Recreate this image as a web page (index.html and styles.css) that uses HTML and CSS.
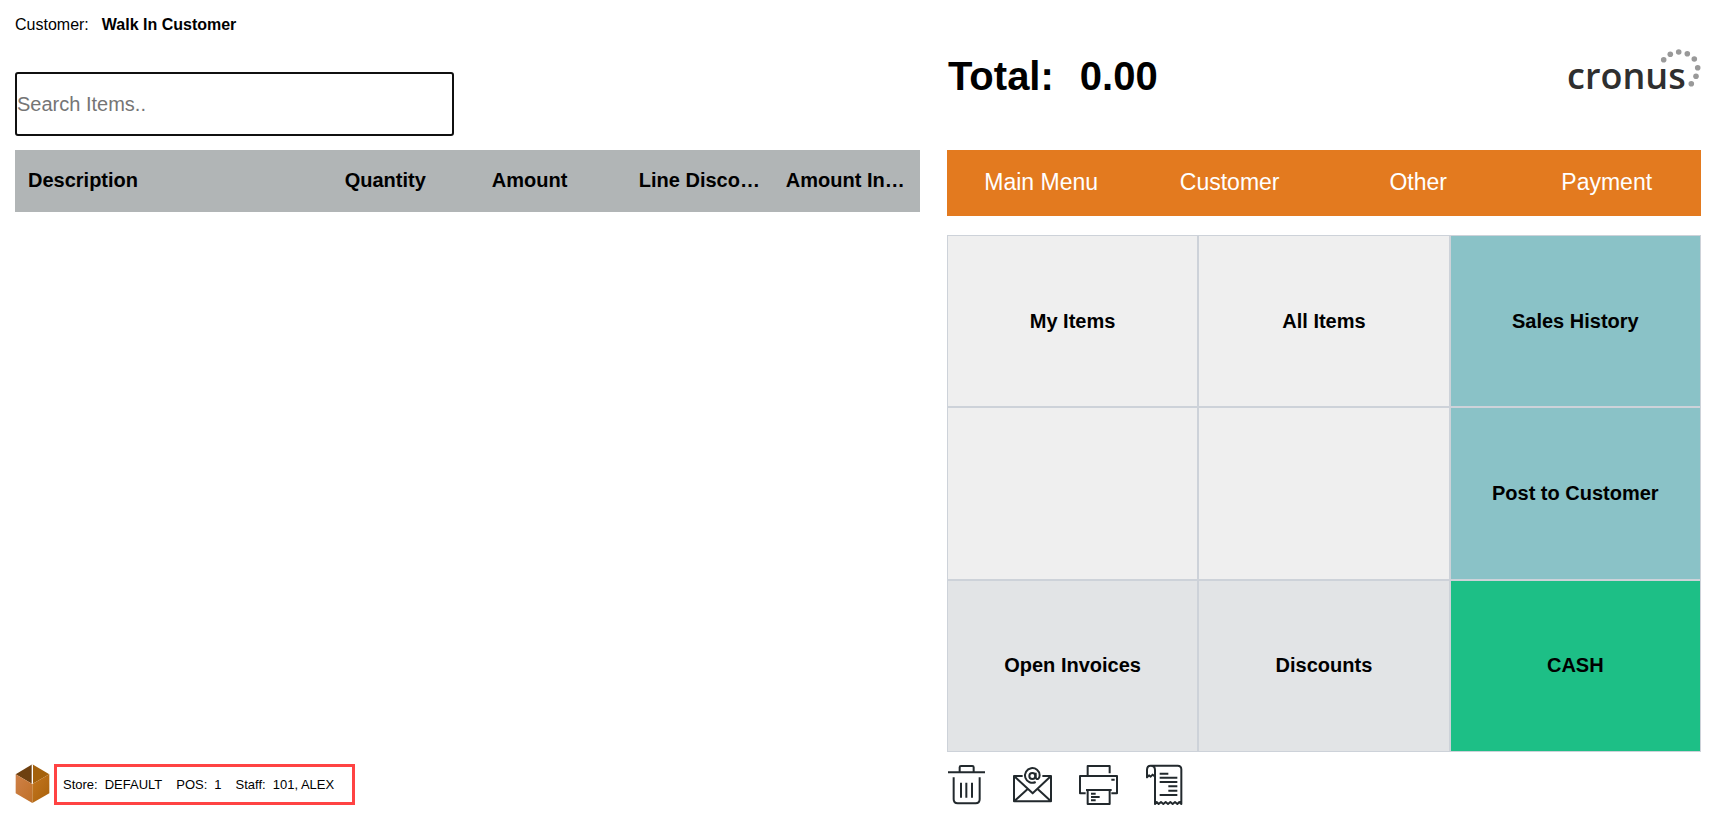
FILE: index.html
```html
<!DOCTYPE html>
<html lang="en">
<head>
  <meta charset="UTF-8" />
  <meta name="viewport" content="width=device-width, initial-scale=1.0"/>
  <title>POS</title>
  <link rel="stylesheet" href="styles.css">
</head>
<body>

  <main class="pos">
    <section class="sale">
      <div class="customer">
        <span>Customer:</span>
        <strong>Walk In Customer</strong>
      </div>

      <input class="search" type="text" placeholder="Search Items.." aria-label="Search Items">

      <table class="lines">
        <thead>
          <tr>
            <th class="wide">Description</th>
            <th>Quantity</th>
            <th>Amount</th>
            <th>Line Disco…</th>
            <th>Amount In…</th>
          </tr>
        </thead>
        <tbody></tbody>
      </table>

      <footer class="status">
        <svg class="box" viewBox="0 0 108 126" aria-hidden="true">
          <defs>
            <linearGradient id="left-side" x1="0" y1="0" x2="1" y2="1">
              <stop offset="0" stop-color="#cf8148"/>
              <stop offset="1" stop-color="#bf7028"/>
            </linearGradient>
            <linearGradient id="right-side" x1="0" y1="0" x2="1" y2="1">
              <stop offset="0" stop-color="#c4761f"/>
              <stop offset="1" stop-color="#a9610a"/>
            </linearGradient>
          </defs>
          <path d="M2 34 52 4V63Z" fill="#6e4010"/>
          <path d="M103 34 52 4V63Z" fill="#a4610c"/>
          <path d="M2 34 52 63V120L2 91Z" fill="url(#left-side)"/>
          <path d="M103 34 52 63V120L103 91Z" fill="url(#right-side)"/>
          <path d="M52 4V62" stroke="#fff" stroke-width="4"/>
        </svg>
        <dl class="session">
          <div><dt>Store:</dt><dd>DEFAULT</dd></div>
          <div><dt>POS:</dt><dd>1</dd></div>
          <div><dt>Staff:</dt><dd>101, ALEX</dd></div>
        </dl>
      </footer>
    </section>

    <section class="panel">
      <header class="summary">
        <div class="total"><span>Total:</span><span>0.00</span></div>
        <svg class="logo" viewBox="0 0 134 44" role="img" aria-label="cronus">
          <text class="logo-text" x="0" y="40">cronus</text>
          <g fill="#999">
            <circle cx="96.7" cy="10.7" r="2.8"/>
            <circle cx="103.3" cy="5.3" r="2.8"/>
            <circle cx="111.7" cy="3" r="2.8"/>
            <circle cx="120.3" cy="4.7" r="2.8"/>
            <circle cx="127.3" cy="10" r="2.8"/>
            <circle cx="130.7" cy="18.7" r="2.8"/>
            <circle cx="129" cy="27.3" r="2.8"/>
            <circle cx="124.3" cy="34.7" r="2.8"/>
          </g>
        </svg>
      </header>

      <nav class="menu">
        <button type="button">Main Menu</button>
        <button type="button">Customer</button>
        <button type="button">Other</button>
        <button type="button">Payment</button>
      </nav>

      <div class="tiles">
        <button type="button">My Items</button>
        <button type="button">All Items</button>
        <button type="button" class="teal">Sales History</button>
        <button type="button" aria-label="Empty"></button>
        <button type="button" aria-label="Empty"></button>
        <button type="button" class="teal">Post to Customer</button>
        <button type="button" class="grey">Open Invoices</button>
        <button type="button" class="grey">Discounts</button>
        <button type="button" class="green">CASH</button>
      </div>

      <div class="actions">
        <button type="button" aria-label="Delete">
          <svg viewBox="0 0 120 126">
            <path d="M3 25H114M38 25V10Q38 6 42 6H76Q80 6 80 10V25"/>
            <path d="M20 40V106Q20 118 32 118H86Q98 118 98 106V40M42 56V101M58 56V101M75 56V101"/>
          </svg>
        </button>
        <button type="button" aria-label="Email">
          <svg viewBox="0 0 120 126">
            <path d="M29 36H3V112H114V36H88M3 36 59 88 114 36M3 112 44 75M114 112 74 75"/>
            <circle cx="58" cy="36" r="9"/>
            <path d="M68 26V39Q69 46 75 45Q80 42 80 34A22 22 0 1 0 68 54"/>
          </svg>
        </button>
        <button type="button" aria-label="Print">
          <svg viewBox="0 0 120 126">
            <path d="M20 88H3V36H114V88H97M26 36V6H92V28M21 78H98M26 78V120H92V78"/>
            <path d="M36 89H50M36 99H62M36 109H50M97 47H107"/>
          </svg>
        </button>
        <button type="button" aria-label="Receipt">
          <svg viewBox="0 0 120 126">
            <path d="M29 37 23 32 17 38 12 34 6 40V18Q6 5 17 5H98Q109 5 109 16V120L103 114 97 120 90 114 83 120 76 114 69 120 62 114 55 120 48 114 41 120 35 114 30 120V18Q30 5 17 5"/>
            <path d="M44 29H70M44 41H97M44 54H97M70 67H97M70 80H97M44 93H97"/>
          </svg>
        </button>
      </div>
    </section>
  </main>

</body>
</html>
```
FILE: styles.css
```css
* {
  box-sizing: border-box;
}

body {
  margin: 0;
  font-family: "Liberation Sans", Arial, sans-serif;
  color: #000;
  background: #fff;
}

button, input {
  font-family: inherit;
}

button {
  padding: 0;
  border: none;
  cursor: pointer;
}

.pos {
  display: grid;
  grid-template-columns: 6fr 5fr;
  column-gap: 27px;
  min-height: 100vh;
  padding: 0 18px 7px 15px;
}

/* left side: customer, search and sale lines */
.sale, .panel {
  display: flex;
  flex-direction: column;
  min-width: 0;
}
.customer {
  display: flex;
  gap: 13px;
  margin: 15px 0 37px;
  font-size: 16px;
  line-height: 20px;
}
.search {
  width: 439px;
  max-width: 100%;
  height: 64px;
  padding: 0;
  border: 2px solid #101010;
  border-radius: 3px;
  font-size: 20px;
  outline: none;
}
.search::placeholder {
  color: #757575;
}
.lines {
  width: 100%;
  margin-top: 14px;
  table-layout: fixed;
  border-collapse: collapse;
  font-size: 20px;
}
.lines th {
  height: 62px;
  padding: 0 10px 2px 13px;
  overflow: hidden;
  text-align: left;
  text-overflow: ellipsis;
  white-space: nowrap;
  background: #b1b5b6;
}
.lines .wide {
  width: 35%;
}

.status {
  display: flex;
  align-items: center;
  gap: 3px;
  margin-top: auto;
  padding-bottom: 1px;
}
.box {
  width: 36px;
  height: 42px;
}
.session {
  display: flex;
  gap: 14px;
  margin: 0;
  padding: 0 18px 0 6px;
  border: 3px solid #ff4343;
  font-size: 13px;
  line-height: 35px;
}
.session div {
  display: flex;
  gap: 7px;
}
.session dd {
  margin: 0;
}

/* right side: total, menu and tiles */
.summary {
  display: flex;
  justify-content: space-between;
  padding: 49px 0 47px;
}
.total {
  display: flex;
  gap: 26px;
  padding: 0 1px;
  font-size: 40px;
  font-weight: bold;
  line-height: 54px;
}
.logo {
  width: 134px;
  height: 44px;
  overflow: visible;
}
.logo-text {
  font-family: "Open Sans", "Noto Sans", sans-serif;
  font-size: 36px;
  font-weight: 600;
  fill: #2f2f2f;
}

.menu {
  display: grid;
  grid-template-columns: repeat(4, 1fr);
  height: 66px;
  background: #e37a1f;
}
.menu button {
  padding-bottom: 2px;
  color: #fff;
  background: transparent;
  font-size: 23px;
}

.tiles {
  flex: 1;
  display: grid;
  grid-template-columns: repeat(3, 1fr);
  grid-auto-rows: 1fr;
  margin: 19px 0 12px;
}
.tiles button {
  min-height: 80px;
  border: 1px solid #cdd2d9;
  background: #efefef;
  color: #000;
  font-size: 20px;
  font-weight: bold;
}
.tiles .teal {
  background: #8ac2c7;
}
.tiles .grey {
  background: #e2e4e6;
}
.tiles .green {
  background: #1dbf86;
}

.actions {
  display: flex;
  gap: 26px;
}
.actions button {
  background: none;
}
.actions svg {
  display: block;
  width: 40px;
  height: 42px;
  fill: none;
  stroke: #22292d;
  stroke-width: 6;
  stroke-linejoin: round;
}
```
